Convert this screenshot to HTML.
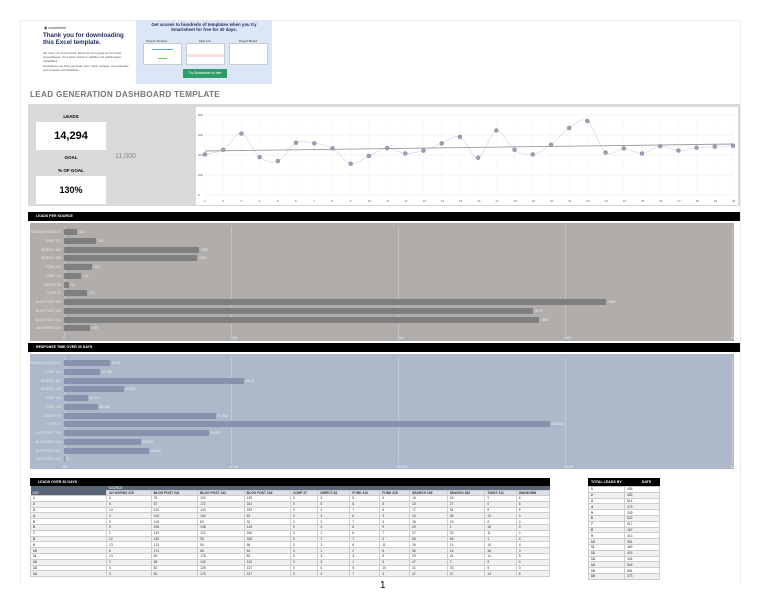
<!DOCTYPE html>
<html><head><meta charset="utf-8">
<style>
*{margin:0;padding:0;box-sizing:border-box}
body{width:768px;height:594px;background:#fff;font-family:"Liberation Sans",sans-serif;position:relative;overflow:hidden}
.abs{position:absolute}
.page{left:20px;top:20px;width:721px;height:562px;border:1px solid #ececec;border-bottom:none}
.blk{background:#000;color:#fff;font-size:3.6px;font-weight:bold;padding-left:8px;line-height:9px}
.lbl{font-size:3.3px;color:#e8e8e8;text-align:right;width:34px}
.bar{height:6px}
.val{font-size:3.3px;color:#eee}
table{border-collapse:collapse;font-size:3.3px;color:#333}
td{border:0.5px solid #ccc;height:5.8px;line-height:4px;padding-left:2px;white-space:nowrap}
</style></head><body>
<div class="abs page"></div>
<!-- banner -->
<div class="abs" style="left:44px;top:26px;font-size:3.6px;color:#334">&#9635; smartsheet</div>
<div class="abs" style="left:43px;top:32px;font-size:6.2px;font-weight:bold;color:#1f2a5c;line-height:7px;width:86px">Thank you for downloading this Excel template.</div>
<div class="abs" style="left:43px;top:51px;font-size:2.9px;color:#555;line-height:4.2px;width:88px">We hope you find it useful. Excel can be a good tool for basic spreadsheets, but it lacks real-time visibility and collaboration capabilities.<br>Smartsheet can help you better plan, track, manage, and automate your projects and workflows.</div>
<div class="abs" style="left:136px;top:20px;width:136px;height:64px;background:#dbe6f7"></div>
<div class="abs" style="left:136px;top:22px;width:136px;text-align:center;font-size:4.4px;font-weight:bold;color:#1f2a5c;line-height:5px">Get access to hundreds of templates when you try<br>Smartsheet for free for 30 days.</div>
<div class="abs" style="left:146px;top:39px;font-size:3px;color:#333">Project Timeline</div>
<div class="abs" style="left:199px;top:39px;font-size:3px;color:#333">Task List</div>
<div class="abs" style="left:239px;top:39px;font-size:3px;color:#333">Project Board</div>
<div class="abs" style="left:143px;top:43px;width:39px;height:22px;background:#fff;border:1px solid #ccc"><div style="margin:5px 8px;height:1px;background:#5aa0e6"></div><div style="margin:8px 14px;height:1px;background:#6c6"></div></div>
<div class="abs" style="left:186px;top:43px;width:39px;height:22px;background:#fff;border:1px solid #ccc"><div style="margin:10px 0 0 0;height:3px;background:#fbe0e0"></div></div>
<div class="abs" style="left:229px;top:43px;width:39px;height:22px;background:#fff;border:1px solid #ccc"></div>
<div class="abs" style="left:183px;top:69px;width:44px;height:9px;background:#2e9e68;color:#fff;font-size:3.2px;text-align:center;line-height:9px">Try Smartsheet for free</div>
<div class="abs" style="left:30px;top:90px;font-size:8.2px;color:#777;letter-spacing:0.3px;font-weight:bold">LEAD GENERATION DASHBOARD TEMPLATE</div>
<!-- KPI -->
<div class="abs" style="left:28px;top:104px;width:712px;height:102px;background:#d9d9d9"></div>
<div class="abs" style="left:36px;top:114px;width:70px;text-align:center;font-size:4.5px;font-weight:bold">LEADS</div>
<div class="abs" style="left:36px;top:122px;width:70px;height:28px;background:#fff;text-align:center;font-size:11px;font-weight:bold;line-height:28px">14,294</div>
<div class="abs" style="left:36px;top:155px;width:70px;text-align:center;font-size:4.5px;font-weight:bold">GOAL</div>
<div class="abs" style="left:115px;top:153px;font-size:7px;color:#888">11,000</div>
<div class="abs" style="left:36px;top:168px;width:70px;text-align:center;font-size:4.5px;font-weight:bold">% OF GOAL</div>
<div class="abs" style="left:36px;top:176px;width:70px;height:28px;background:#fff;text-align:center;font-size:9px;font-weight:bold;line-height:28px">130%</div>
<svg class="abs" style="left:196px;top:107px" width="542" height="98" id="lc"></svg>
<!-- leads per source -->
<div class="abs blk" style="left:28px;top:212px;width:712px">LEADS PER SOURCE</div>
<div class="abs" style="left:30px;top:223px;width:704px;height:118px;background:#b0adab" id="c1"></div>
<div class="abs blk" style="left:28px;top:343px;width:712px">RESPONSE TIME OVER 30 DAYS</div>
<div class="abs" style="left:30px;top:354px;width:704px;height:115px;background:#adb8ca" id="c2"></div>
<!-- table -->
<div class="abs blk" style="left:30px;top:478px;width:520px;line-height:8px">LEADS OVER 30 DAYS</div>
<div class="abs" style="left:30px;top:486px" id="t1"></div>
<div class="abs blk" style="left:588px;top:478px;width:72px;line-height:8px;padding-left:3px">TOTAL LEADS BY<span style="margin-left:20px">DATE</span></div>
<div class="abs" style="left:588px;top:486px" id="t2"></div>
<div class="abs" style="left:0;top:583px;width:768px;height:11px;background:#fff"></div>
<div class="abs" style="left:380px;top:580px;font-size:10px">1</div>
<script>
var v=[406,452,614,379,339,522,517,467,313,391,469,415,444,516,581,373,645,452,406,502,670,740,425,466,415,488,445,473,483,492];
var s='',W=542,x0=9,x1=537,y0=88,k=0.1;
for(var i=0;i<=4;i++){var y=y0-i*200*k;s+='<line x1="'+x0+'" x2="'+x1+'" y1="'+y+'" y2="'+y+'" stroke="#e6e6e6" stroke-width="0.5"/><text x="2" y="'+(y+1)+'" font-size="3" fill="#666">'+(i*200)+'</text>';}
s='<rect width="542" height="98" fill="#fff"/>'+s;
var pts=[];for(i=0;i<30;i++){var x=x0+i*(x1-x0)/29,y=y0-v[i]*k;pts.push([x,y]);s+='<line x1="'+x+'" x2="'+x+'" y1="8" y2="'+y0+'" stroke="#f0f0f0" stroke-width="0.4"/><text x="'+(x-1)+'" y="95" font-size="3" fill="#666">'+(i+1)+'</text>';}
var d='M'+pts[0];for(i=0;i<29;i++){var p0=pts[Math.max(0,i-1)],p1=pts[i],p2=pts[i+1],p3=pts[Math.min(29,i+2)];d+=' C'+(p1[0]+(p2[0]-p0[0])/6)+','+(p1[1]+(p2[1]-p0[1])/6)+' '+(p2[0]-(p3[0]-p1[0])/6)+','+(p2[1]-(p3[1]-p1[1])/6)+' '+p2;}
s+='<path d="'+d+'" fill="none" stroke="#d0d4dc" stroke-width="0.6"/>';
s+='<line x1="'+x0+'" y1="'+(y0-440*k)+'" x2="'+x1+'" y2="'+(y0-510*k)+'" stroke="#999" stroke-width="0.9"/>';
pts.forEach(function(p){s+='<circle cx="'+p[0]+'" cy="'+p[1]+'" r="2" fill="#9aa2b4" stroke="#6f7890" stroke-width="0.4"/>';});
document.getElementById('lc').innerHTML=s;
function bars(id,labels,ends,vals,col,ticks){var h='';for(var g=0;g<5;g++){h+='<div class="abs" style="left:'+(34+g*167)+'px;top:3px;width:0.5px;height:'+(id=='c1'?110:106)+'px;background:rgba(255,255,255,0.25)"></div><div class="abs val" style="left:'+(33+g*167)+'px;top:'+(id=='c1'?113:111)+'px">'+ticks[g]+'</div>';}
for(var i=0;i<12;i++){var y=6+i*8.75;h+='<div class="abs lbl" style="left:-3px;top:'+(y+1)+'px">'+labels[i]+'</div><div class="abs bar" style="left:34px;top:'+y+'px;width:'+(ends[i]-64)+'px;background:'+col+'"></div><div class="abs val" style="left:'+(ends[i]-30+2)+'px;top:'+(y+1)+'px">'+vals[i]+'</div>';}
document.getElementById(id).innerHTML=h;}
var L=['UNKNOWN SOURCE','TWIST 211','SEARCH 182','SEARCH 139','FCBK 219','FCBK 213','DIRECT 84','CONF 37','BLOG POST 240','BLOG POST 242','BLOG POST 241','AD WORDS 215'];
bars('c1',L,[77,96,199,197,92,81,69,87,606,533,539,90],[100,243,1022,1004,214,132,54,176,4589,3179,3590,193],'#7f7f7f',[0,1000,2000,3000,4000]);
bars('c2',L,[110,100,244,124,88,98,216,550,209,141,149,65],['$2.00','$1.460','$6.00','$2.667','$1.101','$1.458','$4.500','$20.000','$4.200','$2.500','$4.000','$'],'#8593ac',['$0','$7.50','$15.00','$22.50','$30.00']);
var cols=['AD WORDS 215','BLOG POST 241','BLOG POST 242','BLOG POST 240','CONF 37','DIRECT 84','FCBK 213','FCBK 219','SEARCH 139','SEARCH 182','TWIST 211','UNKNOWN'];
var t='<table style="width:520px"><tr style="background:#5a6478;color:#fff"><td rowspan="2" style="width:76px;border:none;vertical-align:bottom">DAY</td><td colspan="12" style="border:none;height:4.5px">SOURCE</td></tr><tr style="background:#5a6478;color:#fff;font-weight:bold">';
cols.forEach(function(c){t+='<td style="background:#dde2ea;color:#333;font-weight:bold;height:5px">'+c+'</td>';});t+='</tr>';
var data=[[6,76,102,135,0,3,5,9,16,43,9,6],[5,67,172,161,0,0,6,5,10,27,0,6],[14,100,140,190,0,3,7,6,17,34,8,5],[3,100,134,63,0,3,6,3,10,36,13,0],[9,118,83,32,0,2,7,3,36,19,6,4],[9,156,148,149,0,3,6,9,20,1,16,0],[1,149,122,166,0,1,6,7,37,33,11,4],[12,130,35,185,0,1,7,4,56,56,1,4],[13,113,50,56,0,2,6,11,26,14,15,4],[6,174,56,54,0,1,2,8,56,15,16,3],[14,89,178,83,0,3,3,8,29,44,14,5],[2,68,140,110,0,3,1,9,47,2,9,4],[5,80,128,137,0,0,5,10,31,33,5,0],[3,80,175,137,0,2,7,4,47,47,13,6]];
data.forEach(function(r,i){t+='<tr style="background:'+(i%2?'#f0f0f0':'#fff')+'"><td style="font-weight:bold">'+(i+1)+'</td>';r.forEach(function(c){t+='<td>'+c+'</td>';});t+='</tr>';});
document.getElementById('t1').innerHTML=t+'</table>';
var t2='<table style="width:72px">';for(var i=0;i<16;i++){t2+='<tr style="background:'+(i%2?'#f0f0f0':'#fff')+'"><td style="width:36px;font-weight:bold">'+(i+1)+'</td><td>'+v[i]+'</td></tr>';}
document.getElementById('t2').innerHTML=t2+'</table>';
</script>
</body></html>
